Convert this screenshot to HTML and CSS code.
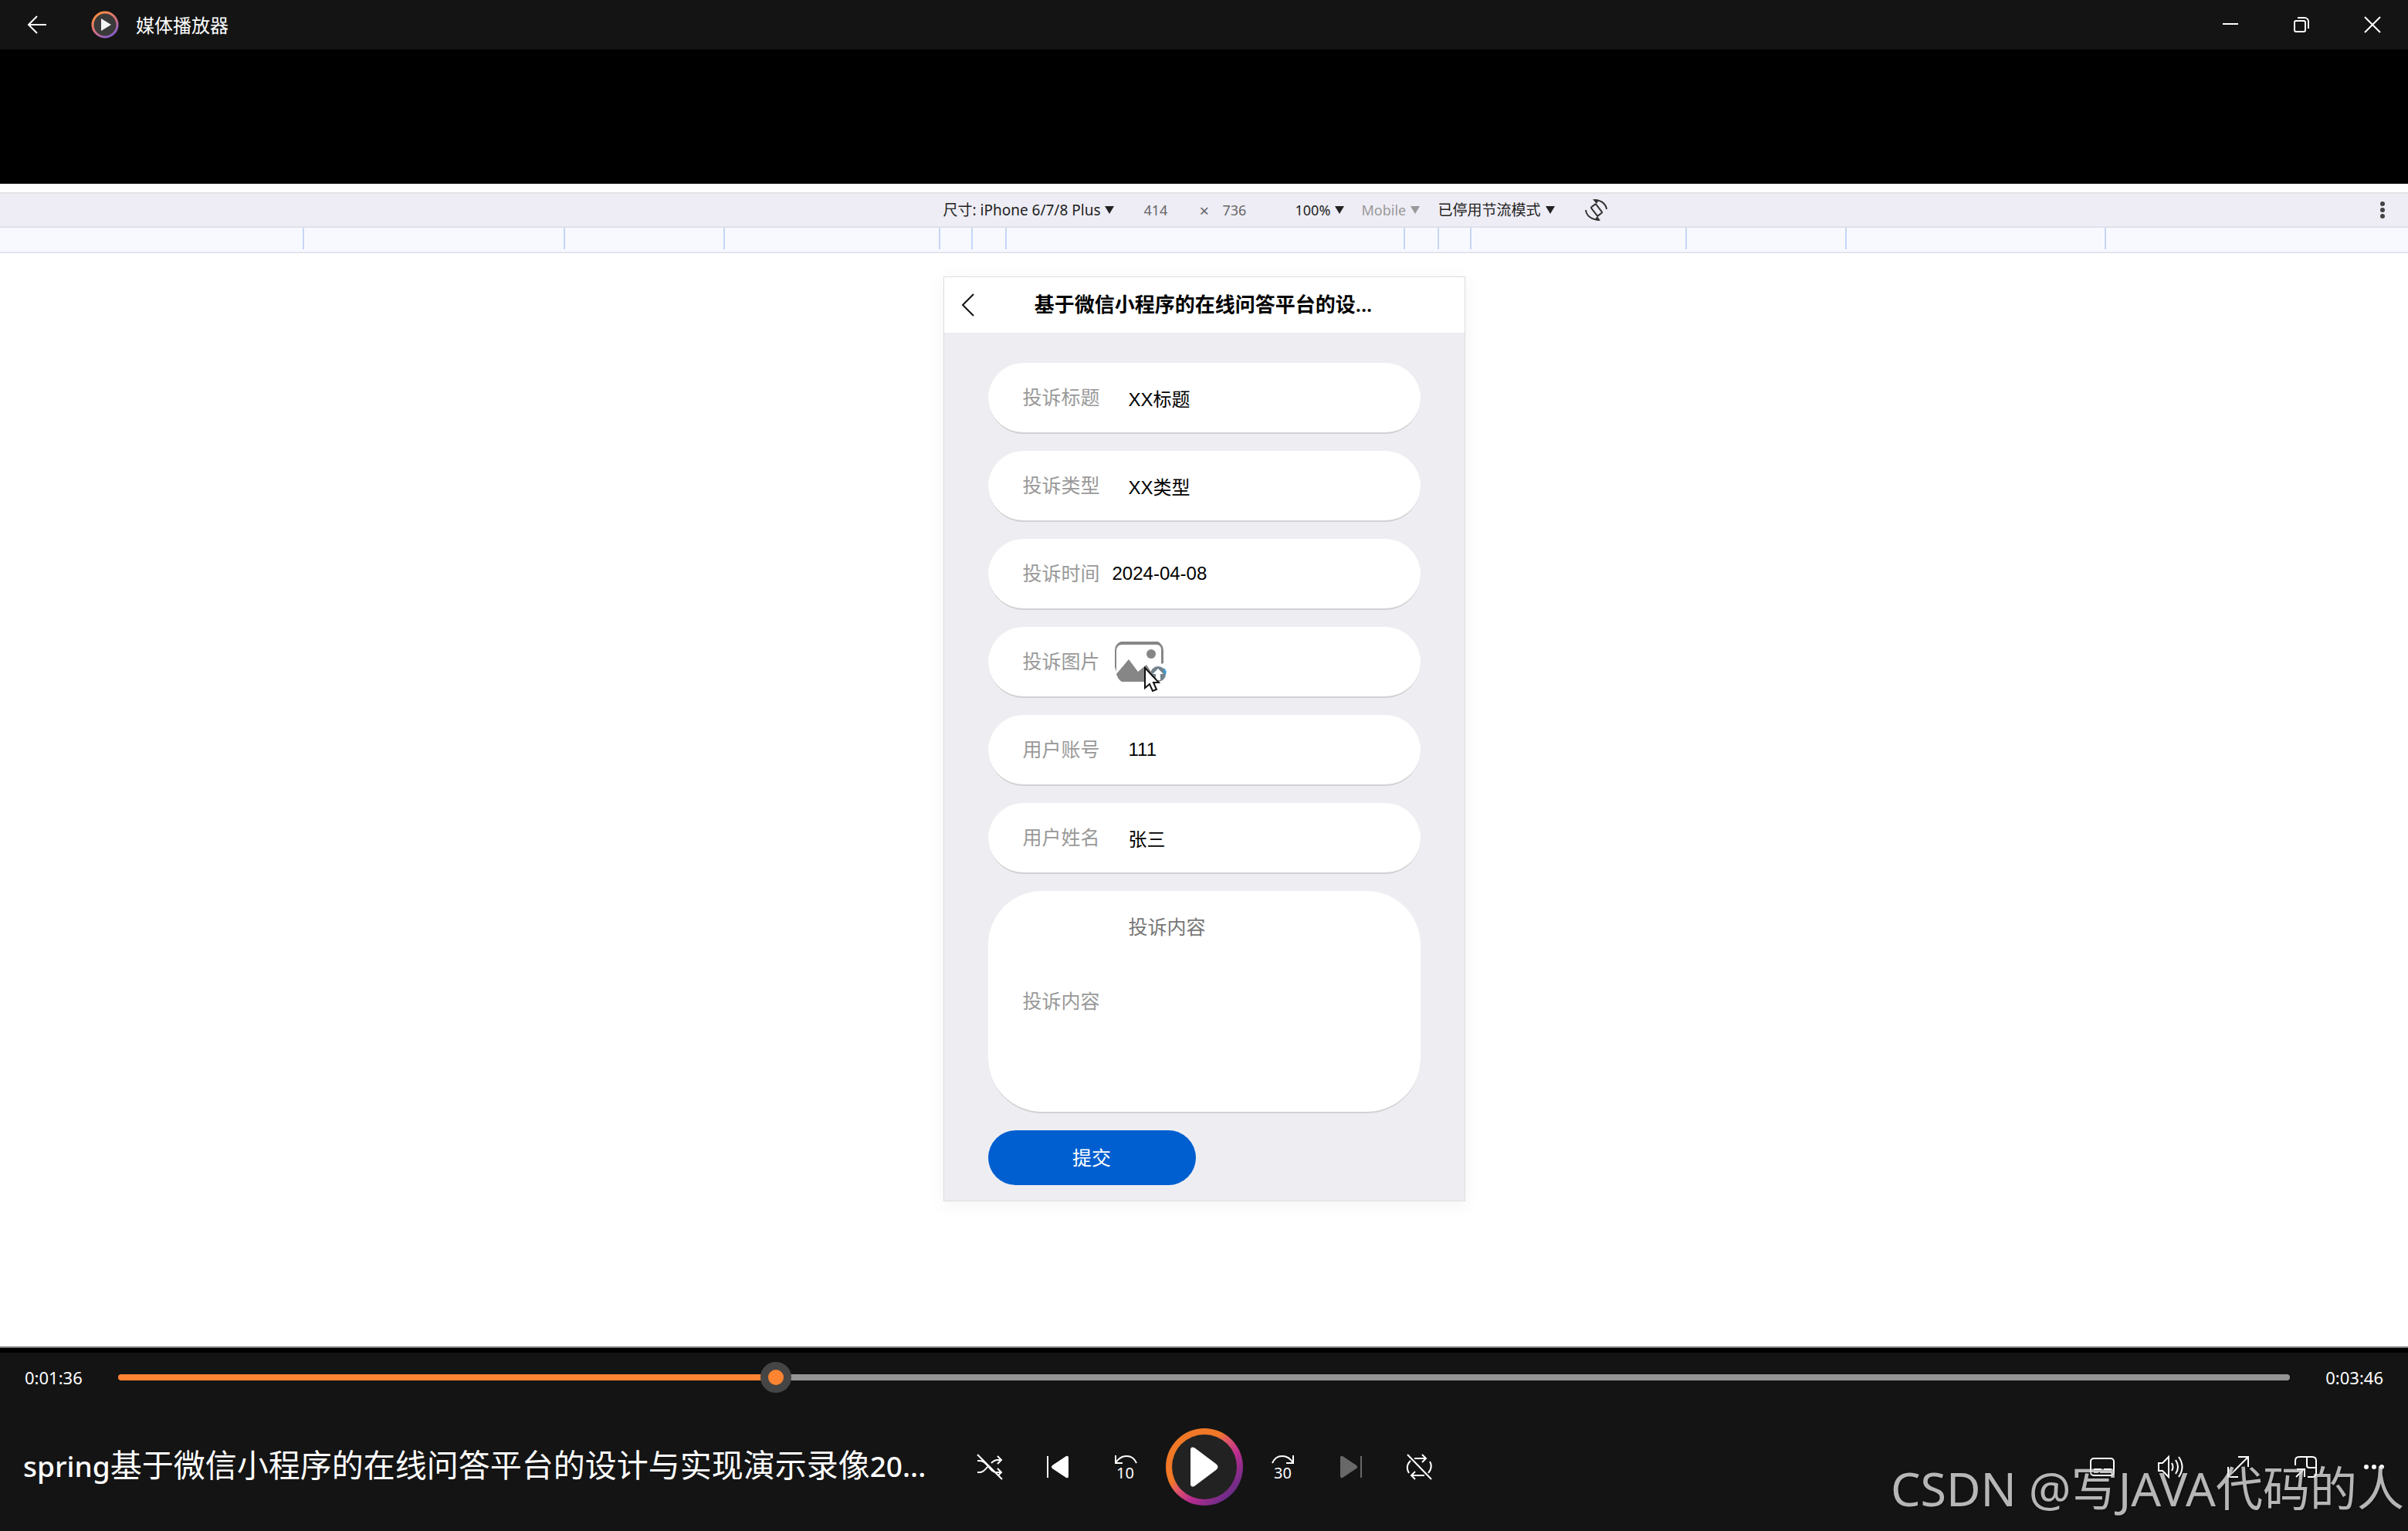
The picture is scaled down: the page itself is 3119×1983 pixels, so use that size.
FILE: index.html
```
<!DOCTYPE html>
<html lang="zh-CN">
<head>
    <meta charset="UTF-8">
    <title>媒体播放器</title>
    <link rel="stylesheet" href="styles.css">
</head>
<body>
    <header class="titlebar">
        <button class="back" aria-label="返回">
            <svg width="28" height="28" viewBox="0 0 28 28" class="line"><path d="M26 14H3M14 3L3 14l11 11"/></svg>
        </button>
        <svg class="app-icon" width="36" height="36" viewBox="0 0 36 36">
            <defs>
                <linearGradient id="ring-small" x1="0.2" y1="0" x2="0.8" y2="1">
                    <stop offset="0" stop-color="#ff9340"/>
                    <stop offset="0.5" stop-color="#d9707c"/>
                    <stop offset="1" stop-color="#7e5cd0"/>
                </linearGradient>
            </defs>
            <circle cx="18" cy="18" r="16" fill="#3a3a3a" stroke="url(#ring-small)" stroke-width="3"/>
            <path d="M13 10l13 8-13 8z" fill="#f4f4f4"/>
        </svg>
        <span class="app-name">媒体播放器</span>
        <div class="window-buttons">
            <button aria-label="最小化"><svg width="24" height="24" viewBox="0 0 24 24" class="line"><path d="M2 11h20"/></svg></button>
            <button aria-label="还原"><svg width="24" height="24" viewBox="0 0 24 24" class="line"><rect x="3" y="7" width="14" height="14" rx="2"/><path d="M7 3h9a5 5 0 0 1 5 5v9"/></svg></button>
            <button aria-label="关闭"><svg width="24" height="24" viewBox="0 0 24 24" class="line"><path d="M2 2l20 20M22 2L2 22"/></svg></button>
        </div>
    </header>

    <main class="stage">
        <div class="video">
            <div class="devbar">
                <label class="pick size"><select aria-label="尺寸"><option>尺寸: iPhone 6/7/8 Plus</option></select></label>
                <input class="dim" type="text" value="414" aria-label="宽度">
                <span class="times">×</span>
                <input class="dim" type="text" value="736" aria-label="高度">
                <label class="pick zoom"><select aria-label="缩放"><option>100%</option></select></label>
                <label class="pick device"><select aria-label="设备类型" disabled><option>Mobile</option></select></label>
                <label class="pick throttle"><select aria-label="节流"><option>已停用节流模式</option></select></label>
                <button class="rotate" aria-label="旋转">
                    <svg width="30" height="30" viewBox="0 0 30 30"><g fill="none" stroke="#333" stroke-width="2"><rect x="11" y="8" width="8" height="14" rx="1" transform="rotate(-38 15 15)"/><path d="M28 14C27 7 21 2 12 2M1 15c1 8 7 12 17 13"/></g><path d="M10 1l8 1-3 5zM20 29l-8-1 4-5z" fill="#333"/></svg>
                </button>
                <button class="more" aria-label="更多">
                    <svg width="8" height="24" viewBox="0 0 8 24" fill="#444"><circle cx="4" cy="4" r="3"/><circle cx="4" cy="12" r="3"/><circle cx="4" cy="20" r="3"/></svg>
                </button>
            </div>
            <div class="ruler">
                <i class="w338"></i><i class="w207"></i><i class="w279"></i><i class="w42"></i><i class="w44"></i><i class="w516"></i><i class="w44"></i><i class="w42"></i><i class="w279"></i><i class="w207"></i><i class="w338 last"></i>
            </div>

            <div class="canvas">
                <section class="phone">
                    <div class="phone-head">
                        <button class="phone-back" aria-label="返回"><svg width="20" height="30" viewBox="0 0 20 30"><path d="M17 1L3 15l14 14" fill="none" stroke="#111" stroke-width="2"/></svg></button>
                        <h1>基于微信小程序的在线问答平台的设...</h1>
                    </div>
                    <form>
                        <div class="field">
                            <label for="title">投诉标题</label>
                            <input id="title" type="text" value="XX标题">
                        </div>
                        <div class="field">
                            <label for="type">投诉类型</label>
                            <input id="type" type="text" value="XX类型">
                        </div>
                        <div class="field">
                            <label for="date">投诉时间</label>
                            <input id="date" class="date" type="text" value="2024-04-08">
                        </div>
                        <div class="field">
                            <label for="picture">投诉图片</label>
                            <button id="picture" class="upload" type="button" aria-label="上传图片">
                                <svg width="68" height="54" viewBox="0 0 68 54">
                                    <path d="M9 1h48q7 4 7 12v16l-3 1V12q0-7-6-7H10q-6 0-7 7v28L1 34V12Q1 4 9 1z" fill="#868686"/>
                                    <path d="M3 43L19 24l12 16 11-9 14 22H10q-5-3-7-10z" fill="#868686"/>
                                    <circle cx="48" cy="17" r="6" fill="#868686"/>
                                    <circle cx="57" cy="43" r="10" fill="#73828c"/>
                                    <path d="M64 35q5 3 3 9l-3-3z" fill="#3d9bd0"/>
                                    <path d="M57 36l7 7h-4v8h-6v-8h-4z" fill="#fff"/>
                                </svg>
                                <svg class="cursor" width="22" height="34" viewBox="0 0 22 34"><path d="M2 2v26l6-5 4 9 5-2-4-9h7z" fill="#fff" stroke="#111" stroke-width="2"/></svg>
                            </button>
                        </div>
                        <div class="field">
                            <label for="account">用户账号</label>
                            <input id="account" type="text" value="111">
                        </div>
                        <div class="field">
                            <label for="name">用户姓名</label>
                            <input id="name" type="text" value="张三">
                        </div>
                        <div class="field tall">
                            <label for="content">投诉内容</label>
                            <textarea id="content" placeholder="投诉内容"></textarea>
                        </div>
                        <button class="submit" type="submit">提交</button>
                    </form>
                </section>
            </div>
        </div>
    </main>

    <footer class="player">
        <div class="seek">
            <span>0:01:36</span>
            <input type="range" min="0" max="1000" value="300" aria-label="播放进度">
            <span>0:03:46</span>
        </div>
        <div class="controls">
            <div class="track-name"><b>spring</b>基于微信小程序的在线问答平台的设计与实现演示录像<b>20...</b></div>
            <div class="buttons">
                <button aria-label="随机播放"><svg width="36" height="36" viewBox="0 0 36 36" class="line"><path d="M2 10h3c10 0 12 15 22 15h5M2 25h3c4 0 7-3 10-7M20 13c3-3 5-4 8-4h5M28 4l5 5-5 5M28 20l5 5-4 4M2 2l32 32"/></svg></button>
                <button aria-label="上一个"><svg width="32" height="32" viewBox="0 0 32 32" fill="#fff"><path d="M3 2v28" stroke="#fff" stroke-width="2"/><path d="M30 4v24q0 3-3 2L9 18q-2-2 0-4L27 2q3-1 3 2z"/></svg></button>
                <button class="skip" aria-label="后退 10 秒"><svg width="32" height="14" viewBox="0 0 32 14"><path d="M3 1v10h9M3 11C10-1 25-1 30 11" class="line"/></svg><span>10</span></button>
                <button class="play" aria-label="播放">
                    <svg width="36" height="52" viewBox="0 0 36 52" fill="#fff"><path d="M0 4q0-5 5-3l28 21q5 4 0 8L5 51q-5 2-5-3z"/></svg>
                </button>
                <button class="skip" aria-label="前进 30 秒"><svg width="32" height="14" viewBox="0 0 32 14"><path d="M29 1v10h-9M29 11C22-1 7-1 2 11" class="line"/></svg><span>30</span></button>
                <button aria-label="下一个" disabled><svg width="32" height="32" viewBox="0 0 32 32" fill="#686868"><path d="M29 2v28" stroke="#686868" stroke-width="2"/><path d="M2 4v24q0 3 3 2l18-12q2-2 0-4L5 2Q2 1 2 4z"/></svg></button>
                <button aria-label="重复"><svg width="36" height="36" viewBox="0 0 36 36" class="line"><path d="M12 7h15M22 2l5 5-5 5M7 10c-5 5-5 11-2 16M25 29H9M13 24l-5 5 5 5M32 11c3 5 2 10-2 15M3 2l31 32"/></svg></button>
            </div>
            <div class="buttons extra">
                <button aria-label="字幕"><svg width="34" height="34" viewBox="0 0 34 34" class="line"><rect x="2" y="6" width="30" height="22" rx="4"/><path d="M6 20h10M19 20h10M6 24h6M14 24h15"/></svg></button>
                <button aria-label="音量"><svg width="34" height="34" viewBox="0 0 34 34" class="line"><path d="M2 12h5l8-8v26l-8-8H2zM19 12q3 5 0 10M24 8q6 9 0 18M28 4q9 13 0 26"/></svg></button>
                <button aria-label="全屏"><svg width="32" height="32" viewBox="0 0 32 32" class="line"><path d="M16 3h13v13M29 3L3 29M3 16v13h13"/></svg></button>
                <button aria-label="迷你播放器"><svg width="32" height="32" viewBox="0 0 32 32" class="line"><path d="M2 14V8q0-5 5-5h17q5 0 5 5v16q0 5-5 5h-6M17 3v11q0 3 3 3h9M3 29l10-10M4 19h10v10"/></svg></button>
                <button aria-label="更多选项"><svg width="32" height="32" viewBox="0 0 32 32" fill="#fff"><circle cx="6" cy="16" r="3"/><circle cx="16" cy="16" r="3"/><circle cx="26" cy="16" r="3"/></svg></button>
            </div>
        </div>
        <div class="watermark">CSDN @写JAVA代码的人</div>
    </footer>
</body>
</html>
```
FILE: styles.css
```
* {
    box-sizing: border-box;
}
body {
    margin: 0;
    min-height: 100vh;
    display: flex;
    flex-direction: column;
    background: #141414;
    color: #fff;
    font-family: "Noto Sans", "Noto Sans CJK SC", sans-serif;
}
button, input, select, textarea {
    font-family: inherit;
    color: inherit;
    background: none;
    border: none;
    padding: 0;
    margin: 0;
    outline: none;
}
button {
    display: flex;
    align-items: center;
    justify-content: center;
}
.line {
    fill: none;
    stroke: #fff;
    stroke-width: 2;
}

/* title bar */
.titlebar {
    display: flex;
    align-items: center;
    height: 64px;
}
.back {
    width: 96px;
    height: 64px;
}
.app-icon {
    margin: 0 22px;
}
.app-name {
    padding-top: 2px;
    font-size: 24px;
    line-height: 36px;
}
.window-buttons {
    display: flex;
    margin-left: auto;
}
.window-buttons button {
    width: 92px;
    height: 64px;
}

/* video */
.stage {
    flex: 1;
    display: flex;
    background: #000;
    padding: 174px 0 6px;
}
.video {
    flex: 1;
    display: flex;
    flex-direction: column;
    background: #fff;
    padding-top: 11px;
    border-bottom: 2px solid #777;
    color: #222;
}
.devbar {
    display: flex;
    align-items: center;
    height: 46px;
    padding-left: calc(50% - 338px);
    background: #eeedf5;
    border-top: 2px solid #e2e2e6;
    border-bottom: 2px solid #dfe1ea;
    font-size: 18px;
}
.pick {
    display: flex;
    align-items: center;
    gap: 5px;
}
.pick select {
    appearance: none;
    font-size: 18px;
    opacity: 1;
}
.pick::after {
    content: "";
    border: 6px solid transparent;
    border-top: 10px solid #222;
    border-bottom: 0;
}
.size {
    width: 260px;
}
.size select, .throttle select {
    font-size: 19px;
}
.dim {
    width: 72px;
    font-size: 18px;
    color: #666;
}
.times {
    width: 30px;
    font-size: 22px;
    color: #666;
}
.zoom {
    margin-left: 22px;
    width: 86px;
}
.device {
    width: 99px;
    color: #999;
}
.device::after {
    border-top-color: #999;
}
.throttle {
    width: 190px;
}
.more {
    margin-left: auto;
    margin-right: 29px;
}
.ruler {
    display: flex;
    justify-content: center;
    height: 33px;
    padding-bottom: 3px;
    background: #f8f9fe;
    border-bottom: 2px solid #e1e5ef;
}
.ruler i {
    border-left: 2px solid #c6d5f5;
}
.ruler .last {
    border-right: 2px solid #c6d5f5;
}
.w42 { width: 42px; }
.w44 { width: 44px; }
.w207 { width: 207px; }
.w279 { width: 279px; }
.w338 { width: 338px; }
.w516 { width: 516px; }

/* phone page */
.canvas {
    flex: 1;
    display: flex;
    justify-content: center;
    align-items: flex-start;
    padding-top: 30px;
}
.phone {
    width: 676px;
    background: #eeeef2;
    border: 1px solid #dddde2;
    box-shadow: 0 4px 24px rgba(0,0,0,0.05);
}
.phone-head {
    display: flex;
    align-items: center;
    height: 72px;
    background: #fff;
}
.phone-back {
    width: 62px;
    height: 70px;
}
.phone-head h1 {
    flex: 1;
    margin: 0;
    padding: 0 64px 2px 0;
    text-align: center;
    font-size: 26px;
    line-height: 38px;
    font-weight: 600;
    color: #000;
}
form {
    display: flex;
    flex-direction: column;
    align-items: flex-start;
    gap: 22px;
    padding: 39px 57px 20px;
}
.field {
    display: flex;
    align-items: center;
    width: 100%;
    height: 92px;
    padding: 0 45px;
    background: #fff;
    border-radius: 46px;
    border-bottom: 2px solid #d2d2d5;
}
.field label {
    width: 116px;
    padding-bottom: 4px;
    font-size: 25px;
    color: #999;
}
.field input {
    flex: 1;
    min-width: 0;
    height: 60px;
    padding-left: 21px;
    font-family: "Liberation Sans", "Noto Sans CJK SC", sans-serif;
    font-size: 24px;
    color: #000;
}
.field .date {
    padding-left: 0;
}
.upload {
    position: relative;
    margin-left: 2px;
}
.cursor {
    position: absolute;
    left: 38px;
    top: 33px;
}
.tall {
    height: 288px;
    border-radius: 70px;
}
.tall textarea {
    flex: 1;
    min-width: 0;
    height: 286px;
    padding: 27px 0 0 21px;
    resize: none;
    font-size: 25px;
    line-height: 38px;
}
.tall textarea::placeholder {
    color: #777;
}
.submit {
    width: 269px;
    height: 71px;
    padding-bottom: 4px;
    border-radius: 36px;
    background: #005fd0;
    color: #fff;
    font-size: 25px;
}

/* player controls */
.player {
    position: relative;
    height: 231px;
}
.seek {
    display: flex;
    align-items: center;
    height: 64px;
    padding: 0 32px;
    gap: 46px;
    font-size: 22px;
}
.seek input {
    appearance: none;
    flex: 1;
    height: 8px;
    border-radius: 4px;
    background: linear-gradient(to right, #ff8432 30%, #969696 30%);
}
.seek input::-webkit-slider-thumb {
    appearance: none;
    width: 40px;
    height: 40px;
    border-radius: 50%;
    border: 10px solid #454545;
    background: #ff8432;
}
.controls {
    display: grid;
    grid-template-columns: 1fr auto 1fr;
    align-items: center;
    height: 168px;
}
.track-name {
    padding: 0 0 4px 30px;
    font-size: 41px;
    line-height: 60px;
    white-space: nowrap;
}
.track-name b {
    font-size: 37px;
    font-weight: 500;
}
.buttons {
    display: flex;
    align-items: center;
}
.buttons button {
    width: 88px;
    height: 88px;
}
.buttons .play {
    width: 100px;
    height: 100px;
    margin: 0 8px;
    border: 8px solid transparent;
    border-radius: 50%;
    background: linear-gradient(#222, #222) padding-box, linear-gradient(135deg, #f07826 38%, #e0556a 48%, #b92d8e 62%, #6a2c87 85%) border-box;
}
.buttons .skip {
    flex-direction: column;
    padding-top: 2px;
}
.skip span {
    font-size: 20px;
    line-height: 20px;
}
.extra {
    justify-content: flex-end;
}
.watermark {
    position: absolute;
    right: 5px;
    bottom: 15px;
    font-size: 61px;
    line-height: 80px;
    color: rgba(255,255,255,0.7);
    text-shadow: 1px 1px 2px rgba(0,0,0,0.4);
    white-space: nowrap;
    pointer-events: none;
}
```
